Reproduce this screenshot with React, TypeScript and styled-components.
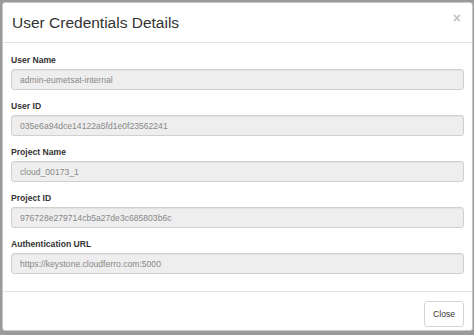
import React from "react";
import styled, { createGlobalStyle } from "styled-components";

const GlobalStyle = createGlobalStyle`
  html, body {
    margin: 0;
    padding: 0;
    background: #9a9a9a;
    font-family: "Liberation Sans", Arial, sans-serif;
    overflow: hidden;
  }
`;

const fields = [
  { label: "User Name", value: "admin-eumetsat-internal" },
  { label: "User ID", value: "035e6a94dce14122a5fd1e0f23562241" },
  { label: "Project Name", value: "cloud_00173_1" },
  { label: "Project ID", value: "976728e279714cb5a27de3c685803b6c" },
  { label: "Authentication URL", value: "https://keystone.cloudferro.com:5000" },
];

export default function App() {
  return (
    <>
      <GlobalStyle />
      <Modal>
        <Header>
          <Title>User Credentials Details</Title>
          <CloseX>×</CloseX>
        </Header>
        <Body>
          {fields.map((f) => (
            <Group key={f.label}>
              <Label>{f.label}</Label>
              <Input readOnly value={f.value} />
            </Group>
          ))}
        </Body>
        <Footer>
          <Button>Close</Button>
        </Footer>
      </Modal>
    </>
  );
}

const Modal = styled.div`
  margin: 2px 1px 0 2px;
  height: 329px;
  background: #fff;
  border: 1px solid #c8c8c8;
  border-radius: 3px;
  box-sizing: border-box;
  display: flex;
  flex-direction: column;
`;

const Header = styled.div`
  display: flex;
  align-items: center;
  justify-content: space-between;
  height: 39px;
  padding: 0 9px;
  border-bottom: 1px solid #e5e5e5;
`;

const Title = styled.h4`
  margin: 0;
  font-size: 15.5px;
  font-weight: normal;
  color: #333;
`;

const CloseX = styled.span`
  font-size: 14px;
  font-weight: bold;
  color: #c4c4c4;
  line-height: 1;
  margin-top: -10px;
  margin-right: 2px;
`;

const Body = styled.div`
  padding: 12px 8px 17px 8px;
  display: flex;
  flex-direction: column;
  gap: 11px;
  border-bottom: 1px solid #e5e5e5;
`;

const Group = styled.div`
  display: flex;
  flex-direction: column;
  gap: 3px;
`;

const Label = styled.label`
  font-size: 8.6px;
  font-weight: bold;
  color: #333;
  line-height: 11px;
`;

const Input = styled.input`
  box-sizing: border-box;
  height: 21px;
  width: 100%;
  padding: 0 8px;
  border: 1px solid #d0d0d0;
  border-radius: 3px;
  background: #eeeeee;
  font-family: "Liberation Sans", Arial, sans-serif;
  font-size: 8.6px;
  color: #888;
  outline: none;
  box-shadow: inset 0 1px 1px rgba(0, 0, 0, 0.05);
`;

const Footer = styled.div`
  flex: 1;
  display: flex;
  justify-content: flex-end;
  align-items: flex-start;
  padding: 9px 8px 0 8px;
`;

const Button = styled.button`
  height: 26px;
  padding: 0 8px;
  background: #fff;
  border: 1px solid #d4d4d4;
  border-radius: 3px;
  font-family: "Liberation Sans", Arial, sans-serif;
  font-size: 8.6px;
  color: #333;
`;
